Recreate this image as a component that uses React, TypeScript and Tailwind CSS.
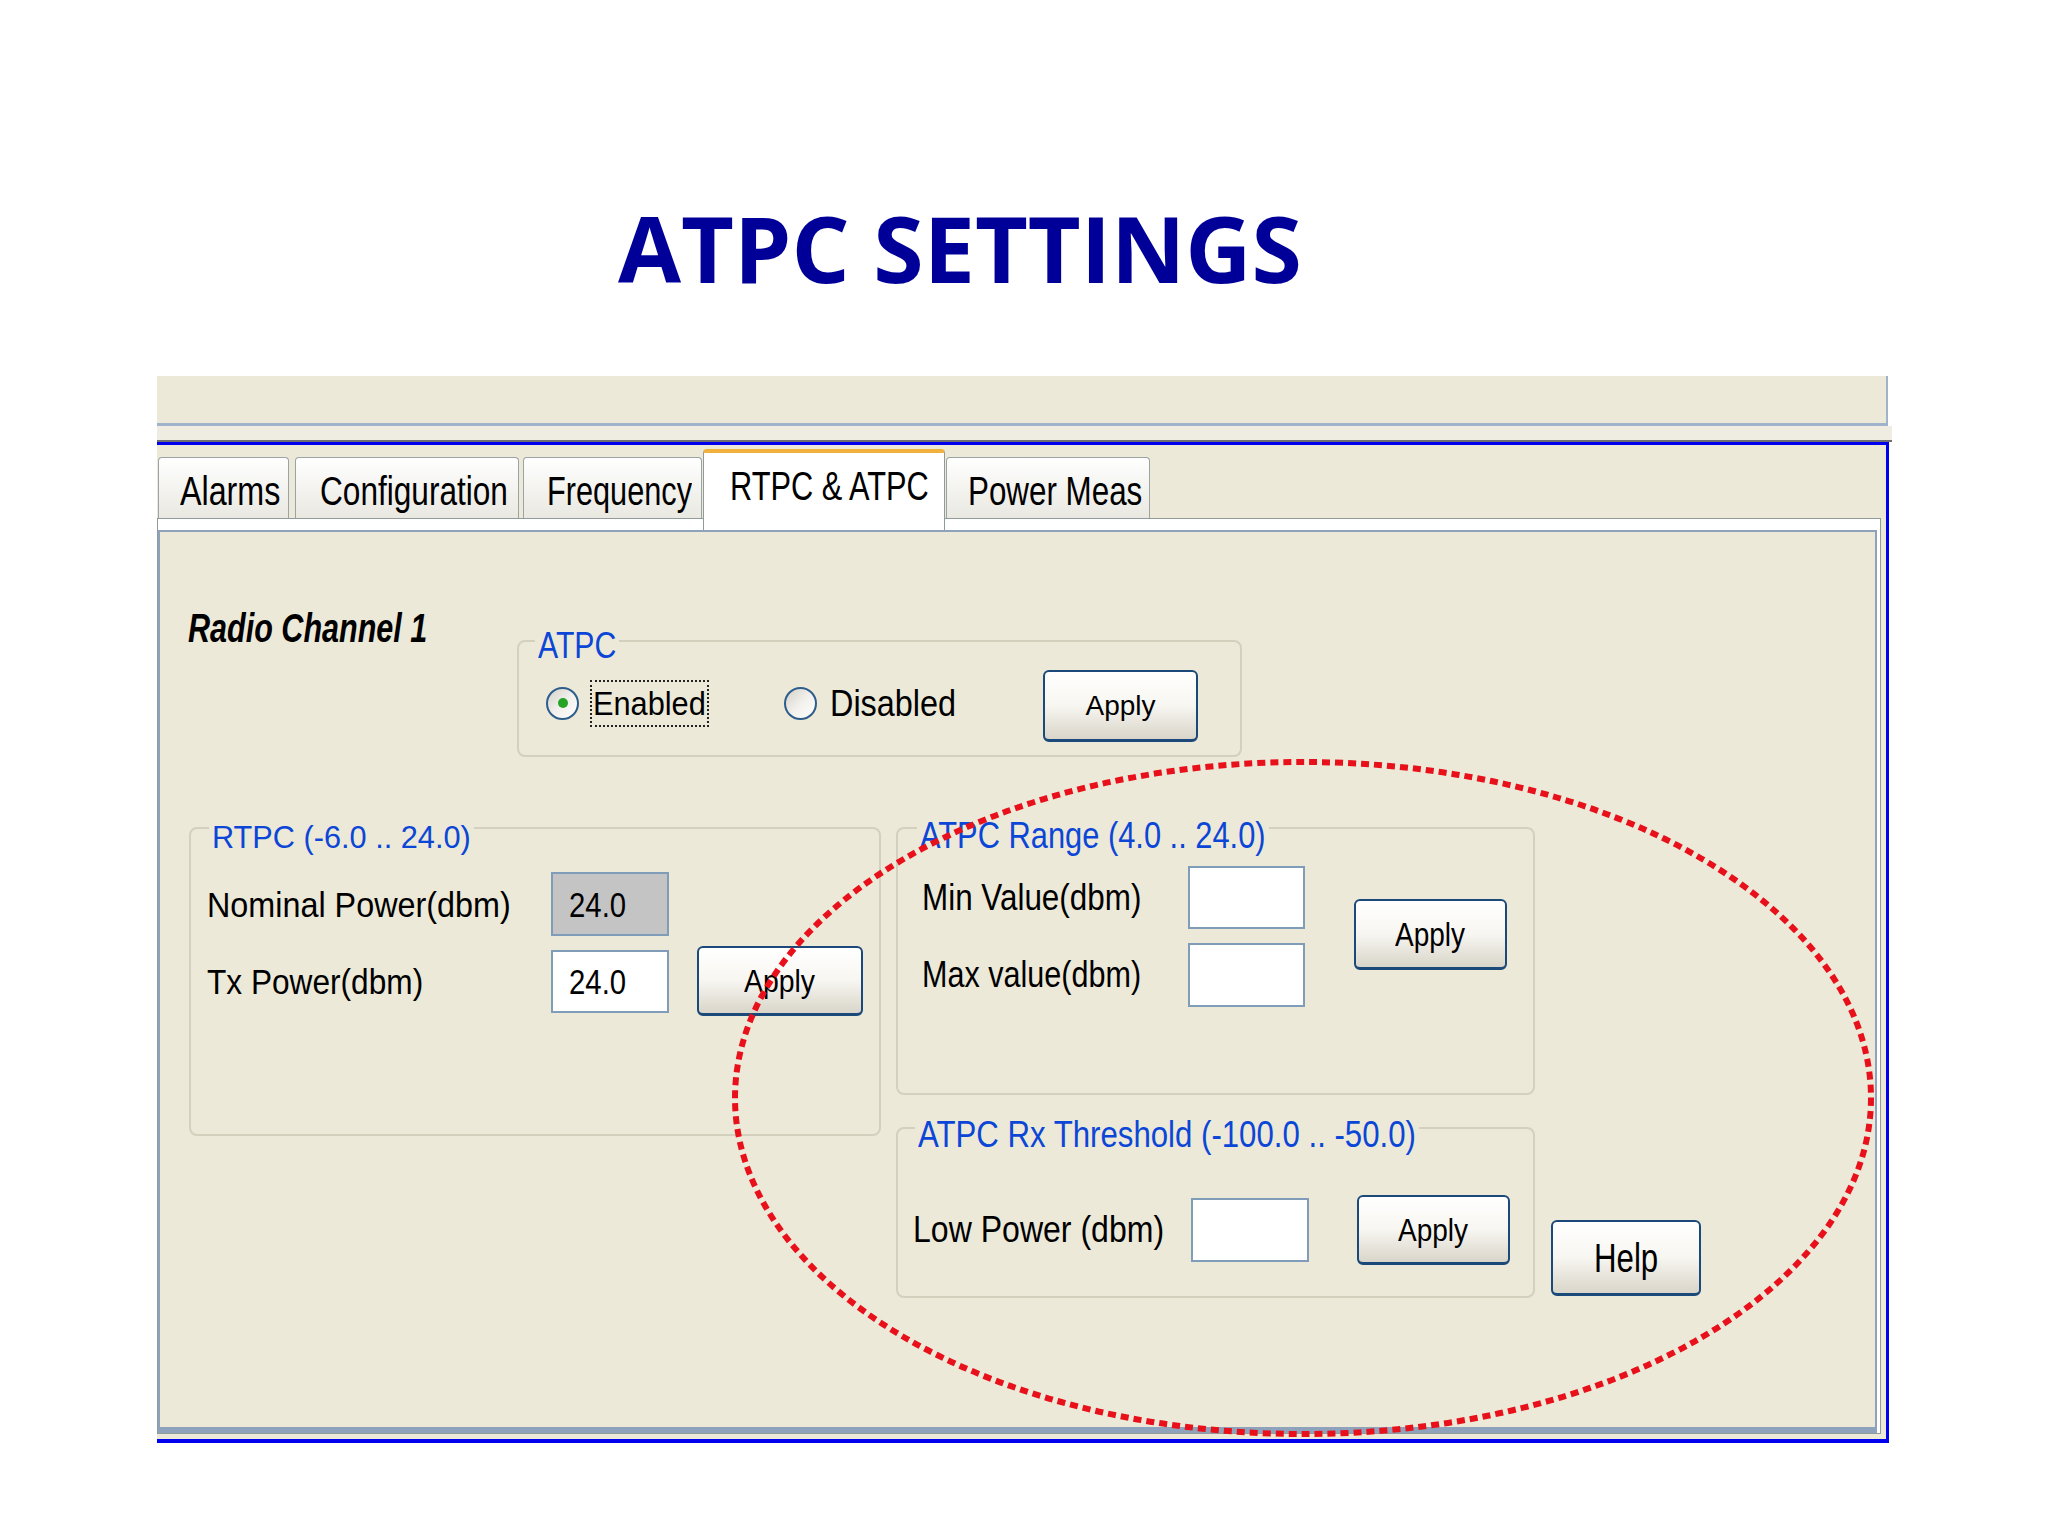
import { useLayoutEffect, useRef, useState, type ReactNode } from 'react';

// Fit squeezes a text run to the width it has in the screenshot (the
// original dialog uses a scaled, narrow Tahoma).
function Fit({ w, children, className = '' }: { w: number; children: ReactNode; className?: string }) {
  const ref = useRef<HTMLSpanElement>(null);
  const [natural, setNatural] = useState(0);

  useLayoutEffect(() => {
    const measure = () => {
      if (ref.current) setNatural(ref.current.offsetWidth);
    };
    measure();
    document.fonts?.ready.then(measure);
  }, [children]);

  return (
    <span
      ref={ref}
      className={`inline-block whitespace-nowrap origin-left leading-none ${className}`}
      style={natural ? { transform: `scaleX(${w / natural})`, marginRight: w - natural } : undefined}
    >
      {children}
    </span>
  );
}

const UI = "font-['Liberation_Sans',Arial,sans-serif]";

function XpButton({ label, w, h, tw, size }: { label: string; w: string; h: string; tw: number; size: string }) {
  return (
    <div
      className={`${w} ${h} shrink-0 flex items-center justify-center rounded-[6px] border-2 border-b-[3px] border-[#1b4a7a] bg-linear-to-b from-white via-[#f7f6f1] to-[#d9d5c9] text-black ${size}`}
    >
      <Fit w={tw}>{label}</Fit>
    </div>
  );
}

function Field({ value, gray = false, w = 'w-[118px]', h = 'h-[64px]' }: { value?: string; gray?: boolean; w?: string; h?: string }) {
  return (
    <div
      className={`${w} ${h} shrink-0 flex items-center pl-[16px] border-2 border-[#7f9db9] text-[35px] text-black ${gray ? 'bg-[#c4c4c4]' : 'bg-white'}`}
    >
      {value ? <Fit w={57}>{value}</Fit> : null}
    </div>
  );
}

function Legend({ text, tw, size, pos }: { text: string; tw: number; size: string; pos: string }) {
  return (
    <div className={`absolute ${pos} px-[3px] bg-[#ece9d8] text-[#0b46d6] ${size}`}>
      <Fit w={tw}>{text}</Fit>
    </div>
  );
}

function Radio({ checked }: { checked?: boolean }) {
  return (
    <div className="w-[33px] h-[33px] shrink-0 rounded-full border-2 border-[#2d5d8c] bg-linear-to-br from-[#d3d1c8] via-[#f1f0ec] to-white flex items-center justify-center">
      {checked ? <div className="w-[10px] h-[10px] rounded-full bg-[#25a325]" /> : null}
    </div>
  );
}

const tabs = [
  { label: 'Alarms', w: 'w-[131px]', ml: 'ml-[1px]', tw: 100 },
  { label: 'Configuration', w: 'w-[224px]', ml: 'ml-[6px]', tw: 188 },
  { label: 'Frequency', w: 'w-[179px]', ml: 'ml-[4px]', tw: 145 },
  { label: 'RTPC & ATPC', w: 'w-[242px]', ml: 'ml-[1px]', tw: 199, active: true },
  { label: 'Power Meas', w: 'w-[204px]', ml: 'ml-[1px]', tw: 174 },
];

export default function App() {
  return (
    <div className={`relative w-[2048px] h-[1536px] bg-white overflow-hidden leading-none ${UI}`}>
      <div className="h-[376px] pt-[203px] pl-[618px]">
        <Fit w={684} className="font-['Open_Sans',sans-serif] font-bold text-[91px] text-[#000099]">
          ATPC SETTINGS
        </Fit>
      </div>

      <div className="ml-[157px] w-[1731px] h-[50px] bg-[#ece9d8] border-b-[3px] border-r-2 border-[#9fb3cb]" />
      <div className="ml-[157px] w-[1735px] h-[16px] bg-[#efede2] border-b-2 border-[#6f6f6f]" />

      <div className="ml-[157px] w-[1732px] border-t-[3px] border-r-[3px] border-b-4 border-[#0000ee] bg-[#ece9d8] pr-[5px] pb-[5px]">
        <div className="flex items-end h-[73px]">
          {tabs.map((t) =>
            t.active ? (
              <div
                key={t.label}
                className={`${t.w} ${t.ml} h-[81px] -mb-[12px] relative z-10 flex items-center justify-center pl-[11px] pb-[11px] bg-white border-x border-[#919b9c] border-t-[4px] border-t-[#f0b23c] rounded-t-[4px] text-[40px] text-black`}
              >
                <Fit w={t.tw}>{t.label}</Fit>
              </div>
            ) : (
              <div
                key={t.label}
                className={`${t.w} ${t.ml} h-[61px] flex items-center justify-center pl-[14px] pt-[6px] bg-linear-to-b from-white to-[#e9e8e1] border border-b-0 border-[#9aa3a6] rounded-t-[4px] text-[40px] text-black`}
              >
                <Fit w={t.tw}>{t.label}</Fit>
              </div>
            ),
          )}
        </div>

        <div className="w-[1724px] border border-[#919b9c] bg-white pt-[11px] pr-[3px]">
          <div className="h-[903px] border-2 border-b-[6px] border-[#8ea2bb] bg-[#ece9d8]">
            {/* Radio channel + ATPC on/off */}
            <div className="flex items-start mt-[76px] pl-[28px]">
              <div className="w-[329px] shrink-0 text-[40px] font-bold italic text-black">
                <Fit w={239}>Radio Channel 1</Fit>
              </div>
              <div className="relative mt-[32px] w-[725px] h-[117px] shrink-0 border-2 border-[#d3d0bd] rounded-[8px]">
                <Legend text="ATPC" tw={78} size="text-[36px]" pos="-top-[14px] left-[16px]" />
                <div className="mt-[28px] h-[72px] flex items-center">
                  <div className="ml-[27px] mb-[6px]">
                    <Radio checked />
                  </div>
                  <div className="ml-[11px] mb-[6px] w-[119px] h-[47px] shrink-0 flex items-center justify-center border-2 border-dotted border-[#222] text-[34px] text-black">
                    <Fit w={113}>Enabled</Fit>
                  </div>
                  <div className="ml-[75px] mb-[6px]">
                    <Radio />
                  </div>
                  <div className="ml-[13px] mb-[4px] w-[126px] shrink-0 text-[36px] text-black">
                    <Fit w={126}>Disabled</Fit>
                  </div>
                  <div className="ml-[87px]">
                    <XpButton label="Apply" w="w-[155px]" h="h-[72px]" tw={70} size="text-[28px]" />
                  </div>
                </div>
              </div>
            </div>

            <div className="flex items-start mt-[70px] pl-[29px]">
              {/* RTPC */}
              <div className="relative w-[692px] h-[309px] shrink-0 border-2 border-[#d3d0bd] rounded-[8px]">
                <Legend text="RTPC (-6.0 .. 24.0)" tw={259} size="text-[32px]" pos="-top-[8px] left-[18px]" />
                <div className="mt-[43px] flex items-center">
                  <div className="w-[360px] shrink-0 pl-[16px] text-[35px] text-black">
                    <Fit w={304}>Nominal Power(dbm)</Fit>
                  </div>
                  <Field value="24.0" gray />
                </div>
                <div className="mt-[10px] h-[70px] flex items-center">
                  <div className="w-[360px] shrink-0 pl-[16px] text-[35px] text-black">
                    <Fit w={216}>Tx Power(dbm)</Fit>
                  </div>
                  <Field value="24.0" h="h-[63px]" />
                  <div className="ml-[28px]">
                    <XpButton label="Apply" w="w-[166px]" h="h-[70px]" tw={71} size="text-[32px]" />
                  </div>
                </div>
              </div>

              <div className="ml-[15px] w-[639px] shrink-0">
                {/* ATPC Range */}
                <div className="relative h-[268px] border-2 border-[#d3d0bd] rounded-[8px]">
                  <Legend text="ATPC Range (4.0 .. 24.0)" tw={346} size="text-[36px]" pos="-top-[11px] left-[19px]" />
                  <div className="mt-[37px] flex items-center">
                    <div>
                      <div className="flex items-center">
                        <div className="w-[290px] shrink-0 pl-[24px] text-[36px] text-black">
                          <Fit w={219}>Min Value(dbm)</Fit>
                        </div>
                        <Field w="w-[117px]" h="h-[63px]" />
                      </div>
                      <div className="mt-[14px] flex items-center">
                        <div className="w-[290px] shrink-0 pl-[24px] text-[36px] text-black">
                          <Fit w={219}>Max value(dbm)</Fit>
                        </div>
                        <Field w="w-[117px]" h="h-[64px]" />
                      </div>
                    </div>
                    <div className="ml-[49px] mb-[4px]">
                      <XpButton label="Apply" w="w-[153px]" h="h-[71px]" tw={70} size="text-[34px]" />
                    </div>
                  </div>
                </div>

                {/* ATPC Rx Threshold */}
                <div className="relative mt-[32px] h-[171px] border-2 border-[#d3d0bd] rounded-[8px]">
                  <Legend text="ATPC Rx Threshold (-100.0 .. -50.0)" tw={498} size="text-[36px]" pos="-top-[12px] left-[17px]" />
                  <div className="mt-[66px] h-[70px] flex items-center">
                    <div className="w-[293px] shrink-0 pl-[15px] text-[36px] text-black">
                      <Fit w={251}>Low Power (dbm)</Fit>
                    </div>
                    <Field />
                    <div className="ml-[48px]">
                      <XpButton label="Apply" w="w-[153px]" h="h-[70px]" tw={70} size="text-[32px]" />
                    </div>
                  </div>
                </div>
              </div>

              <div className="ml-[16px] mt-[393px]">
                <XpButton label="Help" w="w-[150px]" h="h-[76px]" tw={64} size="text-[40px]" />
              </div>
            </div>
          </div>
        </div>
      </div>

      {/* red dotted annotation */}
      <svg className="absolute inset-0 pointer-events-none" width="2048" height="1536" viewBox="0 0 2048 1536">
        <ellipse
          cx="1303"
          cy="1098"
          rx="568"
          ry="336"
          fill="none"
          stroke="#e8101a"
          strokeWidth="6"
          strokeDasharray="8 5"
        />
      </svg>
    </div>
  );
}
